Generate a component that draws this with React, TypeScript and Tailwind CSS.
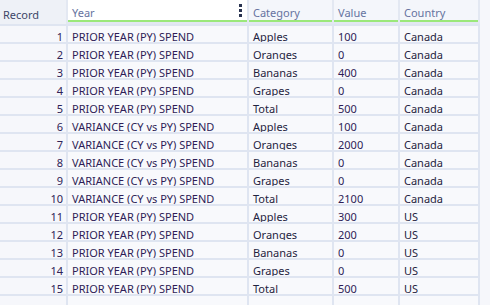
import React from "react";

type Row = [number, string, string, string, string];

const rows: Row[] = [
  [1, "PRIOR YEAR (PY) SPEND", "Apples", "100", "Canada"],
  [2, "PRIOR YEAR (PY) SPEND", "Oranges", "0", "Canada"],
  [3, "PRIOR YEAR (PY) SPEND", "Bananas", "400", "Canada"],
  [4, "PRIOR YEAR (PY) SPEND", "Grapes", "0", "Canada"],
  [5, "PRIOR YEAR (PY) SPEND", "Total", "500", "Canada"],
  [6, "VARIANCE (CY vs PY) SPEND", "Apples", "100", "Canada"],
  [7, "VARIANCE (CY vs PY) SPEND", "Oranges", "2000", "Canada"],
  [8, "VARIANCE (CY vs PY) SPEND", "Bananas", "0", "Canada"],
  [9, "VARIANCE (CY vs PY) SPEND", "Grapes", "0", "Canada"],
  [10, "VARIANCE (CY vs PY) SPEND", "Total", "2100", "Canada"],
  [11, "PRIOR YEAR (PY) SPEND", "Apples", "300", "US"],
  [12, "PRIOR YEAR (PY) SPEND", "Oranges", "200", "US"],
  [13, "PRIOR YEAR (PY) SPEND", "Bananas", "0", "US"],
  [14, "PRIOR YEAR (PY) SPEND", "Grapes", "0", "US"],
  [15, "PRIOR YEAR (PY) SPEND", "Total", "500", "US"],
];

const cols = "grid grid-cols-[66px_179px_83px_64px_78px] gap-x-[2px]";
const cell = "h-[16px] flex items-center pt-[5px]";

function HeaderCell({ label, menu, active }: { label: string; menu?: boolean; active?: boolean }) {
  return (
    <div
      className={`flex items-center justify-between h-[22px] pl-[4px] pr-[4px] border-b-2 border-[#9be87a] ${
        active ? "bg-white" : "bg-[#f4f6fb]"
      }`}
    >
      <span className="text-[#6673a0] pt-[5px]">{label}</span>
      {menu && (
        <span className="flex flex-col gap-[2px] mr-[1px] mt-[1px]">
          <span className="w-[3px] h-[3px] bg-[#2a3350]" />
          <span className="w-[3px] h-[3px] bg-[#2a3350]" />
          <span className="w-[3px] h-[3px] bg-[#2a3350]" />
        </span>
      )}
    </div>
  );
}

export default function App() {
  return (
    <div
      className="w-[490px] h-[305px] overflow-hidden bg-[#f6f7fb] text-[11px] leading-none flex flex-col"
      style={{ fontFamily: "'Noto Sans', 'Open Sans', sans-serif" }}
    >
      {/* header */}
      <div className="h-[2px] bg-[#e6eaf3]" />
      <div className="flex">
        <div className={`${cols} bg-[#e3e8f2] pr-[2px]`}>
          <div className="flex items-center h-[24px] pl-[3px] pt-[5px] bg-[#eef1f7] text-[#3d4668]">Record</div>
          <HeaderCell label="Year" menu active />
          <HeaderCell label="Category" />
          <HeaderCell label="Value" />
          <HeaderCell label="Country" />
        </div>
      </div>

      {/* body */}
      <div className="flex flex-col">
        {[...rows, null].map((r, i) => (
          <div key={i} className="flex">
            <div className={`${cols} bg-[#dfe5f1] pt-[2px] pr-[2px]`}>
              {r ? (
                <>
                  <div className={`${cell} justify-end pr-[3px] bg-[#f6f7fb] text-[#2e2357]`}>{r[0]}</div>
                  <div className={`${cell} pl-[4px] bg-[#f8f9fc] text-[#2e1d57]`}>{r[1]}</div>
                  <div className={`${cell} pl-[4px] bg-[#f8f9fc] text-[#1f2340]`}>{r[2]}</div>
                  <div className={`${cell} pl-[4px] bg-[#f8f9fc] text-[#2e1d57]`}>{r[3]}</div>
                  <div className={`${cell} pl-[4px] bg-[#f8f9fc] text-[#1f2340]`}>{r[4]}</div>
                </>
              ) : (
                <>
                  <div className="h-[16px] bg-[#f6f7fb]" />
                  <div className="h-[16px] bg-[#f8f9fc]" />
                  <div className="h-[16px] bg-[#f8f9fc]" />
                  <div className="h-[16px] bg-[#f8f9fc]" />
                  <div className="h-[16px] bg-[#f8f9fc]" />
                </>
              )}
            </div>
          </div>
        ))}
      </div>
    </div>
  );
}
